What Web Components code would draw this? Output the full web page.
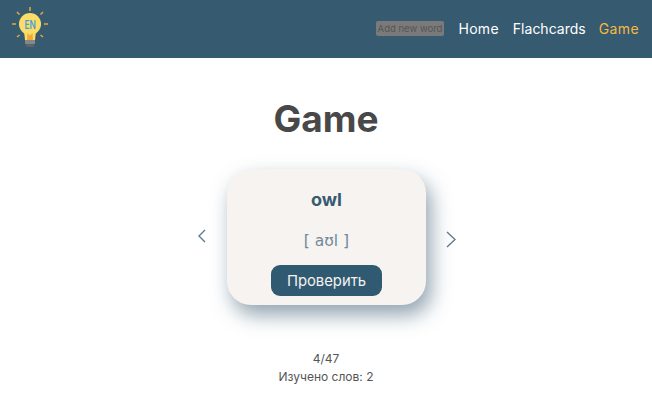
<!DOCTYPE html>
<html lang="ru">
<head>
<meta charset="utf-8">
<title>Game</title>
<style>
  html, body { margin: 0; padding: 0; background: #fff; }
  body { font-family: Inter, "Open Sans", sans-serif; color: #444; }
</style>
</head>
<body>
<app-header></app-header>
<game-page></game-page>
<script>
class AppLogo extends HTMLElement {
  connectedCallback() {
    this.attachShadow({ mode: "open" });
    this.shadowRoot.innerHTML = `
      <style>
        :host { display: block; width: 36px; height: 42px; }
        svg { display: block; }
        text { font-family: Inter, sans-serif; font-size: 12px; font-weight: 600; fill: #4a9fd8; }
      </style>
      <svg width="36" height="42" viewBox="0 0 36 42">
        <g stroke="#e8a83a" stroke-width="1.5" fill="none">
          <path d="M18 1V5M5 6L7.500 8.500M31 6L28.500 8.500M0 18H4M32 18H36M5 31L7.500 29M31 31L28.500 29"/>
        </g>
        <circle cx="18" cy="18" r="11" fill="#fbdc66"/>
        <path d="M12 25H24L23 34H13Z" fill="#fbdc66"/>
        <path d="M15 34L15.500 27L18 29.500L20.500 27L21 34Z" fill="#f2a93b"/>
        <rect x="13" y="34" width="10" height="4" fill="#83878a"/>
        <rect x="14" y="38" width="8" height="3" rx="1" fill="#5e6468"/>
        <text x="12.500" y="23" textLength="11.500" lengthAdjust="spacingAndGlyphs">EN</text>
      </svg>`;
  }
}

class AppHeader extends HTMLElement {
  connectedCallback() {
    this.attachShadow({ mode: "open" });
    this.shadowRoot.innerHTML = `
      <style>
        :host {
          display: flex;
          align-items: flex-start;
          justify-content: space-between;
          height: 58px;
          padding: 0 13px 0 12px;
          background: #365a70;
          font-family: Inter, sans-serif;
        }
        app-logo { margin-top: 6px; }
        nav { display: flex; align-items: center; gap: 14px; height: 57px; }
        a { color: #fff; font-size: 14px; text-decoration: none; }
        a.home { letter-spacing: .3px; }
        a.active { margin-left: -1px; color: #f5b942; letter-spacing: .4px; }
        button {
          height: 15px;
          padding: 0 2px;
          border: 0;
          border-radius: 2px;
          background: #7a7a7a;
          color: #555;
          font: 9.500px Inter, sans-serif;
        }
      </style>
      <app-logo></app-logo>
      <nav>
        <button disabled>Add new word</button>
        <a href="#" class="home">Home</a>
        <a href="#">Flachcards</a>
        <a href="#" class="active">Game</a>
      </nav>`;
  }
}

class WordCard extends HTMLElement {
  connectedCallback() {
    this.attachShadow({ mode: "open" });
    this.shadowRoot.innerHTML = `
      <style>
        :host {
          display: flex;
          flex-direction: column;
          align-items: center;
          box-sizing: border-box;
          width: 199px;
          height: 136px;
          padding-top: 21px;
          border-radius: 24px;
          background: #f7f3f0;
          box-shadow: 5px 10px 20px rgba(54, 90, 112, .55);
          font-family: Inter, sans-serif;
        }
        .word { color: #365a70; font-size: 18px; font-weight: 700; line-height: 20px; }
        .ipa { margin-top: 20px; color: #6e8a9c; font-size: 15.500px; line-height: 22px; font-family: "DejaVu Sans", sans-serif; }
        button {
          margin-top: 13px;
          width: 111px;
          height: 31px;
          border: 0;
          border-radius: 9px;
          background: #2f5a72;
          color: #f6f2ef;
          font: 14.800px Inter, sans-serif;
        }
      </style>
      <div class="word"><slot name="word"></slot></div>
      <div class="ipa"><slot name="ipa"></slot></div>
      <button><slot name="action"></slot></button>`;
  }
}

class NavArrow extends HTMLElement {
  connectedCallback() {
    this.attachShadow({ mode: "open" });
    const next = this.hasAttribute("next");
    const w = next ? 10 : 8;
    const h = next ? 17 : 14;
    const d = next
      ? `M1 1L${w - 1} ${h / 2}L1 ${h - 1}`
      : `M${w - 1} 1L1 ${h / 2}L${w - 1} ${h - 1}`;
    this.shadowRoot.innerHTML = `
      <style>
        :host { display: block; width: ${w}px; height: ${h}px; }
        svg { display: block; }
      </style>
      <svg width="${w}" height="${h}" viewBox="0 0 ${w} ${h}">
        <path d="${d}" fill="none" stroke="#5b7c92" stroke-width="1.400"/>
      </svg>`;
  }
}

class GamePage extends HTMLElement {
  connectedCallback() {
    this.attachShadow({ mode: "open" });
    this.shadowRoot.innerHTML = `
      <style>
        :host {
          display: flex;
          flex-direction: column;
          align-items: center;
          font-family: Inter, sans-serif;
          color: #555;
        }
        h1 { margin: 39px 0 0; font-size: 37px; line-height: 44px; font-weight: 700; color: #484848; }
        .row { display: flex; align-items: center; margin-top: 28px; }
        nav-arrow[prev] { margin: -3px 21px 0 1px; }
        nav-arrow[next] { margin: 4px -1px 0 20px; }
        .stats { margin-top: 45px; font-size: 12px; line-height: 18px; text-align: center; }
      </style>
      <h1>Game</h1>
      <div class="row">
        <nav-arrow prev></nav-arrow>
        <word-card>
          <span slot="word">owl</span>
          <span slot="ipa">[ aʊl ]</span>
          <span slot="action">Проверить</span>
        </word-card>
        <nav-arrow next></nav-arrow>
      </div>
      <div class="stats">
        <div>4/47</div>
        <div>Изучено слов: 2</div>
      </div>`;
  }
}

customElements.define("app-logo", AppLogo);
customElements.define("app-header", AppHeader);
customElements.define("word-card", WordCard);
customElements.define("nav-arrow", NavArrow);
customElements.define("game-page", GamePage);
</script>
</body>
</html>
